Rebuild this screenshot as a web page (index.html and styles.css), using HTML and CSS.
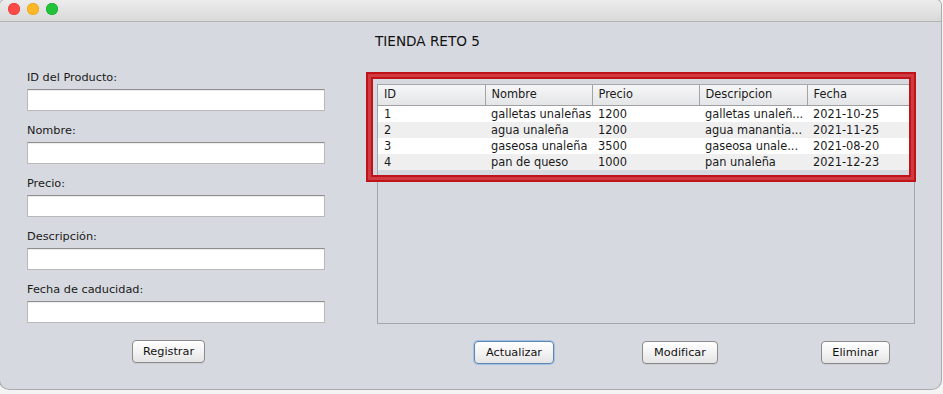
FILE: index.html
```html
<!DOCTYPE html>
<html lang="es">
<head>
<meta charset="utf-8">
<title>TIENDA RETO 5</title>
<link rel="stylesheet" href="styles.css">
</head>
<body>
<div class="window">
  <div class="titlebar">
    <span class="light light-close"></span>
    <span class="light light-min"></span>
    <span class="light light-max"></span>
  </div>
  <div class="content">
    <h1 class="title">TIENDA RETO 5</h1>
    <div class="columns">
      <form class="form">
        <label class="field-label" for="f-id">ID del Producto:</label>
        <input class="field" id="f-id" type="text">
        <label class="field-label" for="f-nombre">Nombre:</label>
        <input class="field" id="f-nombre" type="text">
        <label class="field-label" for="f-precio">Precio:</label>
        <input class="field" id="f-precio" type="text">
        <label class="field-label" for="f-desc">Descripción:</label>
        <input class="field" id="f-desc" type="text">
        <label class="field-label" for="f-fecha">Fecha de caducidad:</label>
        <input class="field" id="f-fecha" type="text">
        <div class="form-actions">
          <button type="button" class="btn btn-registrar">Registrar</button>
        </div>
      </form>
      <div class="table-side">
        <div class="scroll-pane">
          <table class="grid">
            <colgroup>
              <col class="c-id"><col class="c-nombre"><col class="c-precio"><col class="c-desc"><col class="c-fecha">
            </colgroup>
            <thead>
              <tr><th>ID</th><th>Nombre</th><th>Precio</th><th>Descripcion</th><th>Fecha</th></tr>
            </thead>
            <tbody>
              <tr><td>1</td><td>galletas unaleñas</td><td>1200</td><td>galletas unaleñ...</td><td>2021-10-25</td></tr>
              <tr><td>2</td><td>agua unaleña</td><td>1200</td><td>agua manantia...</td><td>2021-11-25</td></tr>
              <tr><td>3</td><td>gaseosa unaleña</td><td>3500</td><td>gaseosa unale...</td><td>2021-08-20</td></tr>
              <tr><td>4</td><td>pan de queso</td><td>1000</td><td>pan unaleña</td><td>2021-12-23</td></tr>
            </tbody>
          </table>
        </div>
        <div class="actions">
          <button type="button" class="btn btn-actualizar is-default">Actualizar</button>
          <button type="button" class="btn btn-modificar">Modificar</button>
          <button type="button" class="btn btn-eliminar">Eliminar</button>
        </div>
      </div>
    </div>
    <div class="highlight"></div>
  </div>
</div>
</body>
</html>
```
FILE: styles.css
```css
* { box-sizing: border-box; }

html, body {
  margin: 0;
  padding: 0;
}

body {
  width: 943px;
  height: 394px;
  background: #f4f4f4;
  font-family: "DejaVu Sans", "Liberation Sans", sans-serif;
  color: #1a1a1a;
  overflow: hidden;
}

.window {
  width: 941px;
  height: 389px;
  background: #d6d9df;
  border-radius: 5px 5px 9px 9px;
  box-shadow: 0 0 0 1px #a9abb0;
  overflow: hidden;
  position: relative;
}

.titlebar {
  height: 22px;
  padding: 3px 0 0 8px;
  display: flex;
  gap: 7px;
  background: linear-gradient(#ececec, #d9d9d9);
  border-bottom: 1px solid #b5b5b5;
}

.light {
  width: 12px;
  height: 12px;
  border-radius: 50%;
}
.light-close { background: #fb4b44; box-shadow: inset 0 0 0 0.5px #e0383a; }
.light-min { background: #fdb726; box-shadow: inset 0 0 0 0.5px #e09e17; }
.light-max { background: #22c33a; box-shadow: inset 0 0 0 0.5px #15a62b; }

.content {
  padding: 11px 0 0 27px;
}

.title {
  margin: 0;
  padding-left: 348px;
  font-size: 13.6px;
  font-weight: normal;
  line-height: 16px;
  color: #111;
}

.columns {
  margin-top: 21px;
  display: flex;
  gap: 52px;
}

.form {
  width: 298px;
  display: flex;
  flex-direction: column;
  margin: 0;
}

.field-label {
  font-size: 11.3px;
  line-height: 16px;
  margin-bottom: 3px;
  color: #1a1a1a;
}

.field {
  height: 22px;
  width: 298px;
  margin: 0 0 12px 0;
  border: 1px solid #b9b9b9;
  border-top-color: #8e8e8e;
  box-shadow: inset 0 1px 1px rgba(0,0,0,0.08);
  background: #fff;
  font: inherit;
  padding: 0 4px;
}

.form-actions {
  margin-top: 5px;
  padding-left: 105px;
  display: flex;
}

.btn {
  height: 23px;
  font-family: "DejaVu Sans", "Liberation Sans", sans-serif;
  font-size: 11.3px;
  color: #111;
  border: 1px solid #8b8b8b;
  border-radius: 4px;
  background: linear-gradient(#ffffff, #f3f3f3 50%, #e4e4e4);
  box-shadow: 0 1px 0 rgba(0,0,0,0.06);
  padding: 0;
  text-align: center;
}

.btn-registrar { width: 73px; }
.btn-actualizar { width: 80px; }
.btn-modificar { width: 76px; margin-left: 88px; }
.btn-eliminar { width: 69px; margin-left: 103px; }

.btn.is-default {
  border-color: #5d86b8;
  box-shadow: 0 0 0 1px #a9c1e0;
}

.table-side {
  margin-top: 14px;
  width: 538px;
}

.scroll-pane {
  height: 240px;
  border: 1px solid #a4a7ac;
  background: #d6d9df;
}

.grid {
  border-collapse: collapse;
  table-layout: fixed;
  width: 531px;
  font-size: 11.4px;
}

.c-id, .c-nombre, .c-precio { width: 107px; }
.c-desc { width: 108px; }
.c-fecha { width: 102px; }

.grid th {
  height: 20px;
  text-align: left;
  font-weight: normal;
  padding: 0 0 0 6px;
  background: linear-gradient(#f6f6f7, #e4e5e7);
  border-left: 1px solid #a2a4a8;
  border-bottom: 1px solid #9fa1a5;
  line-height: 19px;
  color: #1a1a1a;
}
.grid th:first-child { border-left: none; }

.grid td {
  height: 16px;
  line-height: 16px;
  padding: 0 0 0 6px;
  white-space: nowrap;
  overflow: hidden;
  background: #fff;
}
.grid tbody tr:nth-child(even) td { background: #efeff0; }

.actions {
  margin-top: 17px;
  padding-left: 97px;
  display: flex;
}

.highlight {
  position: absolute;
  left: 366px;
  top: 72px;
  width: 550px;
  height: 110px;
  border: 2px solid #bf1219;
  box-shadow: inset 0 0 0 3px #cf3b40, inset 0 0 0 5px #bf1219;
  pointer-events: none;
}
```
